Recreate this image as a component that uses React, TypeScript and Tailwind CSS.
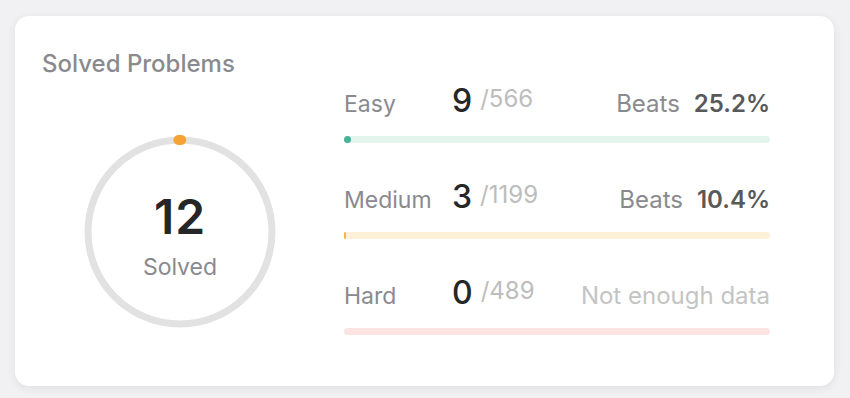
import React from "react";

const rows = [
  { label: "Easy", solved: 9, total: 566, beats: "25.2%", track: "bg-[#e3f4ec]", fill: "bg-[#46b29a]", fillW: 7 },
  { label: "Medium", solved: 3, total: 1199, beats: "10.4%", track: "bg-[#fdf2d7]", fill: "bg-[#f4b740]", fillW: 2 },
  { label: "Hard", solved: 0, total: 489, beats: null, track: "bg-[#fbe4e2]", fill: "bg-[#ef4743]", fillW: 0 },
];

const Ring: React.FC = () => {
  const r = 92;
  const c = 2 * Math.PI * r;
  return (
    <div className="relative w-[200px] h-[200px]">
      <svg width="200" height="200" viewBox="0 0 200 200">
        <circle cx="100" cy="100" r={r} fill="none" stroke="#e2e2e2" strokeWidth="7" />
        <circle
          cx="100"
          cy="100"
          r={r}
          fill="none"
          stroke="#f5a433"
          strokeWidth="10"
          strokeLinecap="round"
          strokeDasharray={`3 ${c}`}
          transform="rotate(-91 100 100)"
        />
      </svg>
      <div className="absolute inset-0 flex flex-col items-center pt-[61px]">
        <span className="text-[48px] leading-none font-semibold tracking-[1px] text-[#262626]">12</span>
        <span className="text-[23px] leading-none text-[#8a8a8e] mt-[15px]">Solved</span>
      </div>
    </div>
  );
};

export default function App() {
  return (
    <div
      className="w-[850px] h-[398px] bg-[#f1f1f3] pt-[16px] pl-[15px]"
      style={{ fontFamily: "Inter, 'Liberation Sans', sans-serif" }}
    >
      <div className="w-[819px] h-[370px] bg-white rounded-[14px] shadow-[0_2px_10px_rgba(0,0,0,0.08)] flex pl-[27px] pt-[33px]">
        <div className="w-[276px] flex flex-col">
          <h2 className="text-[24px] leading-[30px] font-medium text-[#8a8a8e]">Solved Problems</h2>
          <div className="flex justify-center mt-[53px]">
            <Ring />
          </div>
        </div>
        <div className="w-[426px] ml-[26px] pt-[36px] flex flex-col gap-[38px]">
          {rows.map((row) => (
            <div key={row.label}>
              <div className="flex items-baseline h-[30px]">
                <span className="w-[108px] text-[23px] text-[#8a8a8e]">{row.label}</span>
                <span className="text-[32px] leading-none font-medium text-[#262626]">{row.solved}</span>
                <span className="relative -top-[5px] ml-[8px] text-[24px] text-[#bdbdbd]">/{row.total}</span>
                <span className="ml-auto text-[24px] text-[#c4c4c4]">
                  {row.beats ? (
                    <>
                      <span className="text-[#8a8a8e]">Beats</span>
                      <span className="ml-[14px] font-semibold text-[#595959]">{row.beats}</span>
                    </>
                  ) : (
                    "Not enough data"
                  )}
                </span>
              </div>
              <div className={`mt-[21px] h-[7px] rounded-full ${row.track} flex`}>
                {row.fillW > 0 && (
                  <div className={`h-full rounded-full ${row.fill}`} style={{ width: row.fillW }} />
                )}
              </div>
            </div>
          ))}
        </div>
      </div>
    </div>
  );
}
